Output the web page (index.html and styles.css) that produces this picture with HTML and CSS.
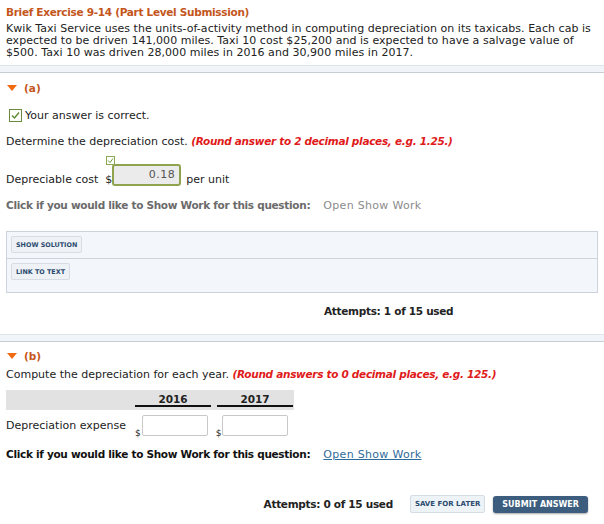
FILE: index.html
```html
<!DOCTYPE html>
<html>
<head>
<meta charset="utf-8">
<link rel="stylesheet" href="styles.css">
</head>
<body>
<div class="intro">
  <div class="title">Brief Exercise 9-14 (Part Level Submission)</div>
  <p class="problem">Kwik Taxi Service uses the units-of-activity method in computing depreciation on its taxicabs. Each cab is<br>expected to be driven 141,000 miles. Taxi 10 cost $25,200 and is expected to have a salvage value of<br>$500. Taxi 10 was driven 28,000 miles in 2016 and 30,900 miles in 2017.</p>
</div>
<div class="sep"></div>

<section class="part part-a">
  <div class="part-head"><span class="tri"></span>(a)</div>
  <div class="correct">
    <span class="cbox"><svg width="11" height="11" viewBox="0 0 11 11"><path d="M2 5.5 L4.5 8 L9 2.5" fill="none" stroke="#5c8a2e" stroke-width="1.4"/></svg></span>
    Your answer is correct.
  </div>
  <p class="q">Determine the depreciation cost. <em class="hint">(Round answer to 2 decimal places, e.g. 1.25.)</em></p>
  <div class="ans-row">
    <span class="txt">Depreciable cost</span>
    <span class="txt dollar">$</span>
    <span class="field-wrap">
      <span class="mini-check"><svg width="7" height="7" viewBox="0 0 7 7"><path d="M1 3.5 L3 5.5 L6 1.5" fill="none" stroke="#6a9a3a" stroke-width="1"/></svg></span>
      <span class="field ok">0.18</span>
    </span>
    <span class="txt">per unit</span>
  </div>
  <div class="showwork grey"><b>Click if you would like to Show Work for this question:</b><span class="sw-link">Open Show Work</span></div>
  <div class="tools">
    <div class="tool-row"><span class="tbtn">SHOW SOLUTION</span></div>
    <div class="tool-row last"><span class="tbtn">LINK TO TEXT</span></div>
  </div>
  <div class="attempts-a">Attempts: 1 of 15 used</div>
</section>
<div class="sep"></div>

<section class="part part-b">
  <div class="part-head"><span class="tri"></span>(b)</div>
  <p class="q q-b">Compute the depreciation for each year. <em class="hint">(Round answers to 0 decimal places, e.g. 125.)</em></p>
  <div class="tbl">
    <div class="thead">
      <div class="lbl"></div>
      <div class="yr">2016</div>
      <div class="yr">2017</div>
    </div>
    <div class="trow">
      <div class="lbl">Depreciation expense</div>
      <div class="cell"><span class="sd">$</span><span class="field empty"></span></div>
      <div class="cell"><span class="sd">$</span><span class="field empty"></span></div>
    </div>
  </div>
  <div class="showwork dark"><b>Click if you would like to Show Work for this question:</b><span class="sw-link link">Open Show Work</span></div>
  <div class="footer">
    <span class="attempts">Attempts: 0 of 15 used</span>
    <span class="save">SAVE FOR LATER</span>
    <span class="submit">SUBMIT ANSWER</span>
  </div>
</section>
</body>
</html>
```
FILE: styles.css
```css
body {
  margin: 0;
  font-family: "DejaVu Sans", Verdana, sans-serif;
  font-size: 11px;
  color: #222;
  background: #fff;
  width: 604px;
  height: 524px;
  overflow: hidden;
}
p { margin: 0; }
.title, .part-head, .showwork b, .hint, .attempts, .attempts-a, .yr {
  font-size: 10.5px;
  letter-spacing: -0.3px;
}
.intro { padding: 5px 0 0 6px; height: 60px; }
.title { color: #c4561c; font-weight: bold; line-height: 14px; }
.problem { line-height: 12px; margin-top: 4px; letter-spacing: 0.04px; white-space: nowrap; }
.sep {
  height: 6px;
  background: #f1f4f8;
  border-top: 1px solid #dfe4ea;
  border-bottom: 1px solid #c7cdd4;
}
.part { padding: 0 6px; }
.part-head {
  color: #c4561c;
  font-weight: bold;
  display: flex;
  align-items: center;
  gap: 7px;
  height: 14px;
  margin-top: 8px;
  padding-left: 1px;
  letter-spacing: 0;
}
.tri {
  width: 0; height: 0;
  border-left: 5px solid transparent;
  border-right: 5px solid transparent;
  border-top: 6px solid #f06a12;
}
.correct {
  display: flex;
  align-items: center;
  gap: 3px;
  margin-top: 13px;
  padding-left: 3px;
  height: 14px;
}
.cbox {
  width: 11px; height: 11px;
  border: 1px solid #6b8a3e;
  display: inline-flex;
  background: #fff;
}
.q { margin-top: 12px; line-height: 14px; }
.hint { color: #e01a1a; font-weight: bold; font-style: italic; }
.ans-row {
  display: flex;
  align-items: flex-end;
  margin-top: 14px;
  height: 23px;
}
.txt { line-height: 11px; padding-bottom: 1px; }
.dollar { margin-left: 7px; }
.field-wrap { position: relative; display: inline-block; margin-right: 5px; }
.mini-check {
  position: absolute;
  left: -6px; top: -8px;
  width: 7px; height: 7px;
  border: 1px solid #8aa858;
  background: #fff;
  display: flex;
  z-index: 2;
}
.field {
  display: block;
  box-sizing: border-box;
  height: 22px;
  border-radius: 3px;
  text-align: right;
}
.field.ok {
  width: 69px;
  background: #ebebeb;
  border: 2px solid #8fa34e;
  padding: 2px 4px 0 0;
  color: #555;
  line-height: 14px;
  letter-spacing: 0.5px;
}
.showwork { margin-top: 12px; line-height: 14px; display: flex; align-items: baseline; }
.showwork.grey { color: #6b6b6b; }
.showwork.grey .sw-link { color: #8b8b8b; }
.sw-link { margin-left: 13px; letter-spacing: 0.3px; }
.sw-link.link { color: #2f6b9a; text-decoration: underline; }
.tools {
  margin-top: 18px;
  border: 1px solid #cdd3da;
  background: #f3f6fa;
}
.tool-row { padding: 4px 4px 5px 4px; border-bottom: 1px solid #cdd3da; height: 17px; }
.tool-row.last { border-bottom: none; height: 24px; }
.tbtn {
  display: inline-block;
  font-size: 6.4px;
  font-weight: bold;
  color: #2b4a6e;
  background: #eef2f7;
  border: 1px solid #d7dde4;
  border-radius: 2px;
  padding: 4px 4px 3px 4px;
  line-height: 8px;
}
.attempts-a { font-weight: bold; margin-top: 11px; margin-left: 318px; line-height: 14px; height: 30px; }
.part-b .part-head { margin-top: 7px; }
.q-b { margin-top: 4px; }
.tbl { margin-top: 8px; width: 288px; }
.thead { display: flex; background: #e2e2e2; height: 20px; align-items: flex-end; }
.thead .lbl { width: 129px; }
.yr {
  width: 76px;
  margin-right: 6px;
  text-align: center;
  font-weight: bold;
  border-bottom: 2px solid #111;
  line-height: 12px;
  margin-bottom: 3px;
  letter-spacing: 0;
}
.thead .yr:last-child { margin-right: 0; }
.trow { display: flex; align-items: center; height: 24px; margin-top: 3px; }
.trow .lbl { width: 129px; }
.cell { display: flex; align-items: flex-end; margin-right: 8px; }
.cell:last-child { margin-right: 0; }
.sd { font-size: 9px; margin-right: 1px; line-height: 9px; transform: translateY(2px); }
.field.empty {
  width: 66px;
  height: 21px;
  border: 1px solid #c8c8c8;
  background: #fff;
  border-radius: 2px;
}
.showwork.dark { margin-top: 10px; color: #111; }
.footer {
  display: flex;
  justify-content: flex-end;
  align-items: center;
  margin-top: 33px;
  padding-right: 10px;
}
.attempts { font-weight: bold; margin-right: 17px; }
.save {
  font-size: 7px;
  font-weight: bold;
  color: #2b4a6e;
  background: #eef3f8;
  border: 1px solid #d5dce4;
  border-radius: 2px;
  padding: 4px 4px 4px 4px;
  line-height: 8px;
  margin-right: 8px;
}
.submit {
  font-size: 8px;
  font-weight: bold;
  color: #fff;
  background: #3c5d7e;
  border-radius: 3px;
  padding: 4px 9px 3px 9px;
  line-height: 10px;
  box-shadow: 0 1px 2px rgba(0,0,0,0.35);
}
```
